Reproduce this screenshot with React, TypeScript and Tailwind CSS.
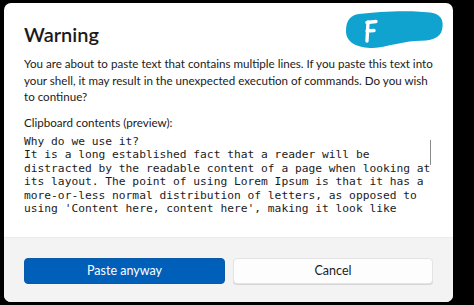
export default function App() {
  const preview = [
    "Why do we use it?",
    "It is a long established fact that a reader will be",
    "distracted by the readable content of a page when looking at",
    "its layout. The point of using Lorem Ipsum is that it has a",
    "more-or-less normal distribution of letters, as opposed to",
    "using 'Content here, content here', making it look like",
  ];

  return (
    <div className="w-[474px] h-[305px] bg-black pt-[3px] pl-[4px] overflow-hidden">
      <div
        className="w-[449px] h-[299px] bg-white rounded-[7px] overflow-hidden flex flex-col text-[#1b1b1b]"
        style={{ fontFamily: "Lato, 'Noto Sans', sans-serif" }}
      >
        {/* BODY */}
        <div className="relative flex-1 px-5 pt-[18px]">
          <h1 className="text-[20px] leading-[26px] font-semibold">Warning</h1>

          {/* scribble over redacted text */}
          <svg className="absolute left-[339px] top-[6px]" width="102" height="42" viewBox="0 0 102 42">
            <path
              d="M16 5 C38 2 72 1 90 4 C99 6 101 13 99 21 C97 29 89 32 72 32 C57 33 44 38 30 39 C15 39 3 34 3 22 C3 11 8 6 16 5 Z"
              fill="#10a3cf"
            />
            <path d="M25 13 L24 32 M24 13.5 L33 12.5 M24 22 L31 21.5" stroke="white" strokeWidth="3.4" strokeLinecap="round" fill="none" />
          </svg>

          <p className="mt-[9px] text-[11.6px] leading-[16.5px]">
            You are about to paste text that contains multiple lines. If you paste this text into
            <br />
            your shell, it may result in the unexpected execution of commands. Do you wish
            <br />
            to continue?
          </p>

          <p className="mt-[9px] text-[11.6px] leading-[16.5px]">Clipboard contents (preview):</p>

          <div className="relative mt-[4px]">
            <pre
              className="text-[11.25px] leading-[13.4px] text-[#1b1b1b]"
              style={{ fontFamily: "'DejaVu Sans Mono', 'Liberation Mono', monospace" }}
            >
              {preview.join("\n")}
            </pre>
            <div className="absolute left-[406px] top-[5px] w-px h-[25px] bg-[#8a8a8a]" />
          </div>
        </div>

        {/* FOOTER */}
        <div className="h-[65px] bg-[#f3f3f3] border-t border-[#ebebeb] px-5 pt-[20px] flex gap-2">
          <button className="w-[201px] h-[26px] rounded-[4px] bg-[#005fb8] text-white text-[12.5px] border border-[#0a5aa8]">
            Paste anyway
          </button>
          <button className="w-[200px] h-[26px] rounded-[4px] bg-[#fdfdfd] text-[#1b1b1b] text-[12.5px] border border-[#e3e3e3] shadow-[0_1px_0_#d6d6d6]">
            Cancel
          </button>
        </div>
      </div>
    </div>
  );
}
